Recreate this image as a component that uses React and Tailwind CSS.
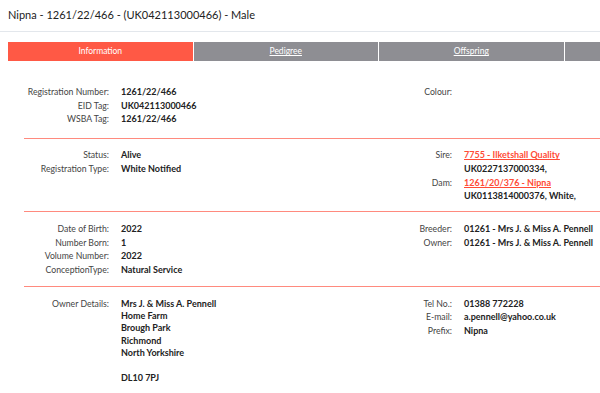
import React from 'react';

/* ---------- animal record: info tab ---------- */

const sections = [
  {
    pad: 'pb-[12px]',
    left: [
      ['Registration Number:', '1261/22/466'],
      ['EID Tag:', 'UK042113000466'],
      ['WSBA Tag:', '1261/22/466'],
    ],
    right: [['Colour:', '']],
  },
  {
    pad: 'pt-[9px] pb-[8px]',
    left: [
      ['Status:', 'Alive'],
      ['Registration Type:', 'White Notified'],
    ],
    right: [
      ['Sire:', { link: '7755 - Ilketshall Quality', sub: 'UK0227137000334,' }],
      ['Dam:', { link: '1261/20/376 - Nipna', sub: 'UK0113814000376, White,' }],
    ],
  },
  {
    pad: 'pt-[10px] pb-[9px]',
    left: [
      ['Date of Birth:', '2022'],
      ['Number Born:', '1'],
      ['Volume Number:', '2022'],
      ['ConceptionType:', 'Natural Service'],
    ],
    right: [
      ['Breeder:', '01261 - Mrs J. & Miss A. Pennell'],
      ['Owner:', '01261 - Mrs J. & Miss A. Pennell'],
    ],
  },
];

function Value({ v }) {
  if (v && typeof v === 'object') {
    return (
      <div>
        <div className="text-[#ff4b36] underline underline-offset-1">{v.link}</div>
        <div>{v.sub}</div>
      </div>
    );
  }
  return <div>{v}</div>;
}

function Rows({ rows, labelW }) {
  return (
    <div className="flex flex-col">
      {rows.map(([label, v]) => (
        <div key={label} className="flex gap-[12px]">
          <div className={"shrink-0 text-right text-[#444] text-[8.7px] " + labelW}>{label}</div>
          <div className="font-bold text-[#222]">
            <Value v={v} />
          </div>
        </div>
      ))}
    </div>
  );
}

export default function App() {
  const tabs = ['Information', 'Pedigree', 'Offspring', ''];
  return (
    <div
      className="w-[600px] h-[393px] overflow-hidden bg-white text-[#222]"
      style={{ fontFamily: 'Lato, "Noto Sans", sans-serif' }}
    >
      <div className="px-[8px] h-[32px] pb-[1px] flex items-center text-[11px] text-[#222] border-b border-[#e3e7ec]">
        Nipna - 1261/22/466 - (UK042113000466) - Male
      </div>

      <div className="flex gap-[1px] pl-[8px] mt-[10px] overflow-hidden">
        {tabs.map((t, i) => (
          <div
            key={i}
            className={
              "shrink-0 w-[184.5px] h-[19px] flex items-center justify-center text-[8.5px] text-white " +
              (i === 0 ? "bg-[#ff5945]" : "bg-[#8e8e93] underline")
            }
          >
            {t}
          </div>
        ))}
      </div>

      <div className="ml-[24px] mt-[24px] text-[9px] leading-[13.7px]">
        {sections.map((s, i) => (
          <div key={i} className={"flex border-b border-[#ff8a7e] " + s.pad}>
            <div className="w-[288px] shrink-0">
              <Rows rows={s.left} labelW="w-[85px]" />
            </div>
            <div className="flex-1">
              <Rows rows={s.right} labelW="w-[140px]" />
            </div>
          </div>
        ))}

        <div className="flex pt-[10px]">
          <div className="w-[288px] shrink-0 flex gap-[12px]">
            <div className="w-[85px] shrink-0 text-right text-[#444] text-[8.7px]">Owner Details:</div>
            <div className="font-bold leading-[12.3px] pt-[1px]">
              <div>Mrs J. &amp; Miss A. Pennell</div>
              <div>Home Farm</div>
              <div>Brough Park</div>
              <div>Richmond</div>
              <div>North Yorkshire</div>
              <div className="h-[12.3px]"></div>
              <div>DL10 7PJ</div>
            </div>
          </div>
          <div className="flex-1">
            <Rows
              rows={[
                ['Tel No.:', '01388 772228'],
                ['E-mail:', 'a.pennell@yahoo.co.uk'],
                ['Prefix:', 'Nipna'],
              ]}
              labelW="w-[140px]"
            />
          </div>
        </div>
      </div>
    </div>
  );
}
